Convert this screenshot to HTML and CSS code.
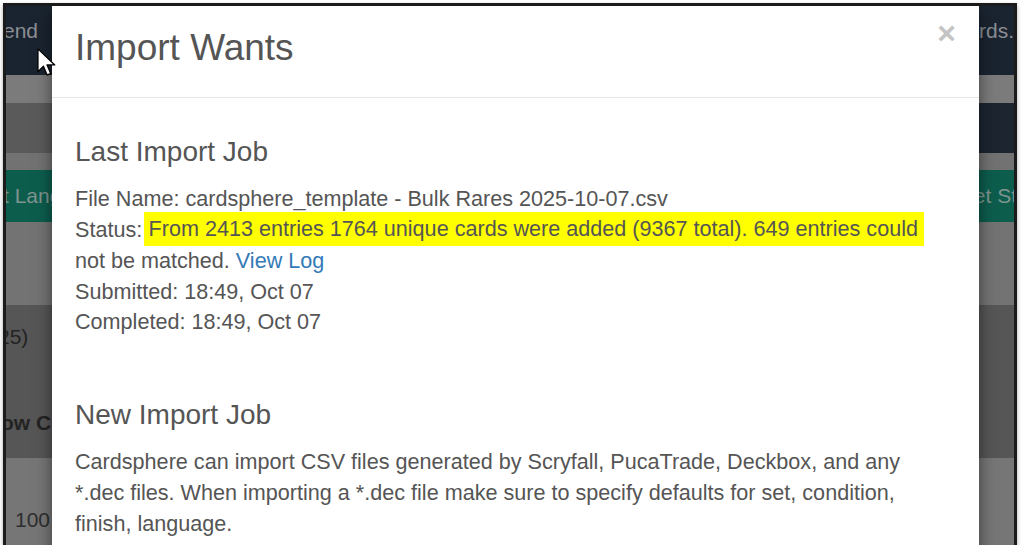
FILE: index.html
```html
<!DOCTYPE html>
<html lang="en">
<head>
    <meta charset="UTF-8">
    <title>Import Wants</title>
    <link rel="stylesheet" href="styles.css">
</head>
<body>

    <div class="shot">
        <!-- Page behind the dialog (dimmed) -->
        <div class="page">
            <div class="row nav">
                <span class="nav-left">end</span>
                <span class="nav-right">Cards.</span>
            </div>
            <div class="row band-1"></div>
            <div class="row band-2">
                <div class="band-2-left"></div>
                <div class="band-2-right"></div>
            </div>
            <div class="row band-3"></div>
            <div class="row teal">
                <span class="teal-left">t Language</span>
                <span class="teal-right">Reset Stats</span>
            </div>
            <div class="row band-4"></div>
            <div class="row band-5">
                <span class="count">25)</span>
                <span class="col-head">ow C</span>
            </div>
            <div class="row band-6">
                <span class="pct">100</span>
            </div>
        </div>

        <!-- Modal -->
        <div class="modal">
            <div class="modal-header">
                <h4 class="modal-title">Import Wants</h4>
                <span class="close">&times;</span>
            </div>
            <div class="modal-body">
                <div class="section">
                    <h3>Last Import Job</h3>
                    <p>
                        File Name: cardsphere_template - Bulk Rares 2025-10-07.csv<br>
                        Status:<span class="mark">From 2413 entries 1764 unique cards were added (9367 total). 649 entries could</span> not be matched. <a href="#">View Log</a><br>
                        Submitted: 18:49, Oct 07<br>
                        Completed: 18:49, Oct 07
                    </p>
                </div>
                <div class="section">
                    <h3>New Import Job</h3>
                    <p>Cardsphere can import CSV files generated by Scryfall, PucaTrade, Deckbox, and any *.dec files. When importing a *.dec file make sure to specify defaults for set, condition, finish, language.</p>
                </div>
            </div>
        </div>

        <svg class="cursor" width="19" height="29" viewBox="0 0 13 20">
            <path d="M0.6 0.6 L0.6 16.4 L4.4 12.6 L6.9 18.6 L9.4 17.6 L6.9 11.7 L12.2 11.7 Z" fill="#fff" stroke="#000" stroke-width="0.9" stroke-linejoin="round"/>
        </svg>
    </div>

</body>
</html>
```

FILE: styles.css
```css
/* Screenshot frame */
body {
    margin: 0;
    padding: 3px 0 0 3px;
    background-color: #ffffff;
    font-family: "Liberation Sans", Arial, sans-serif;
}
.shot {
    position: relative;
    width: 1008px;
    height: 539px;
    border: 3px solid #1b1b1b;
    border-bottom: none;
    overflow: hidden;
    box-shadow: 0 2px 4px rgba(0, 0, 0, 0.35);
}

/* Dimmed page behind the dialog */
.page {
    font-size: 21px;
    line-height: 24px;
}
.row {
    display: flex;
    justify-content: space-between;
    white-space: nowrap;
}
.nav {
    height: 69px;
    padding-top: 13px;
    box-sizing: border-box;
    background-color: #1a2430;
    color: #8a8e94;
}
.nav-left {
    margin-left: -3px;
}
.band-1 {
    height: 28px;
    background-color: #7b7b7b;
}
.band-2 {
    height: 50px;
}
.band-2-left {
    width: 300px;
    background-color: #5a5a5a;
}
.band-2-right {
    flex: 1;
    background-color: #1c2530;
}
.band-3 {
    height: 17px;
    background-color: #727272;
}
.teal {
    height: 52px;
    align-items: center;
    background-color: #0d5d4d;
    color: #7f948f;
}
.teal-left {
    margin-left: -3px;
}
.teal-right {
    margin-right: -31px;
}
.band-4 {
    height: 83px;
    background-color: #737373;
}
.band-5 {
    height: 153px;
    flex-direction: column;
    justify-content: flex-start;
    background-color: #565656;
    color: #232323;
}
.count {
    margin: 20px 0 0 -8px;
}
.col-head {
    margin: 62px 0 0 -5px;
    font-weight: bold;
}
.band-6 {
    height: 87px;
    background-color: #767676;
    color: #2e2e2e;
}
.pct {
    margin: 50px 0 0 9px;
}

/* Modal */
.modal {
    position: absolute;
    top: 0;
    left: 46px;
    width: 927px;
    height: 560px;
    background-color: #ffffff;
    box-shadow: 0 5px 15px rgba(0, 0, 0, 0.5);
    color: #555555;
}
.modal-header {
    display: flex;
    justify-content: space-between;
    padding: 15px 23px 23px;
    border-bottom: 1px solid #e5e5e5;
}
.modal-title {
    margin: 0;
    font-size: 37px;
    font-weight: normal;
    line-height: 53px;
}
.close {
    align-self: flex-start;
    margin-top: -4px;
    font-size: 32px;
    font-weight: bold;
    line-height: 1;
    color: #c4c4c4;
}
.modal-body {
    padding: 39px 34px 23px 23px;
    font-size: 21.6px;
    line-height: 30.9px;
}
.section + .section {
    margin-top: 62px;
}
h3 {
    margin: 0 0 16px;
    font-size: 28px;
    font-weight: normal;
    line-height: 1.1;
}
p {
    margin: 0;
}
.mark {
    margin-left: 2px;
    padding: 0.2em 0.3em 0.2em 0.2em;
    background-color: #ffff00;
}
a {
    color: #337ab7;
    text-decoration: none;
}

/* Mouse pointer */
.cursor {
    position: absolute;
    left: 31px;
    top: 42px;
}
```
